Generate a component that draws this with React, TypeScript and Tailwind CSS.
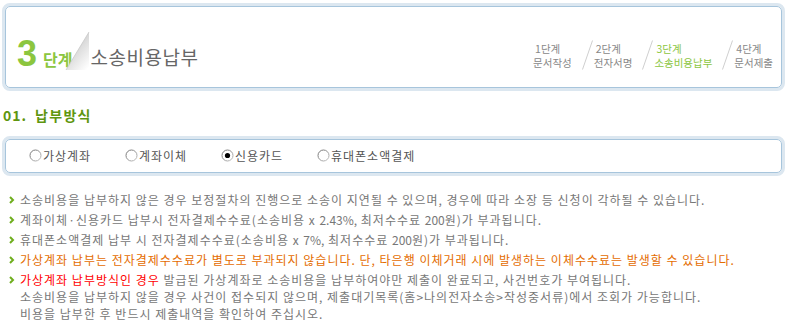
import React from "react";

const font = "font-['Noto_Sans_CJK_KR',sans-serif]";

const steps = [
  { no: "1단계", name: "문서작성", active: false },
  { no: "2단계", name: "전자서명", active: false },
  { no: "3단계", name: "소송비용납부", active: true },
  { no: "4단계", name: "문서제출", active: false },
];

const methods = [
  { label: "가상계좌", checked: false },
  { label: "계좌이체", checked: false },
  { label: "신용카드", checked: true },
  { label: "휴대폰소액결제", checked: false },
];

function Radio({ checked }: { checked: boolean }) {
  return (
    <svg width="13" height="13" viewBox="0 0 13 13" className="shrink-0">
      <defs>
        <linearGradient id="rg" x1="0" y1="0" x2="1" y2="1">
          <stop offset="0" stopColor="#6a6a6a" />
          <stop offset="1" stopColor="#c4c4c4" />
        </linearGradient>
      </defs>
      <circle cx="6.5" cy="6.5" r="5.5" fill="#fff" stroke="url(#rg)" />
      {checked && <circle cx="6.5" cy="6.5" r="2.6" fill="#000" />}
    </svg>
  );
}

function Bullet() {
  return (
    <svg width="6" height="8" viewBox="0 0 6 8" className="shrink-0 mt-[5px]">
      <path d="M1 1l3 3-3 3" stroke="#6fae1e" strokeWidth="2" fill="none" />
    </svg>
  );
}

function Slash() {
  return (
    <svg width="11" height="30" viewBox="0 0 11 30" className="shrink-0 -mt-[2px]">
      <line x1="10.5" y1="0.5" x2="0.5" y2="29.5" stroke="#cfcfcf" />
    </svg>
  );
}

// folded-corner mark between "단계" and the step title
function PageCurl() {
  return (
    <svg width="26" height="40" viewBox="0 0 26 40" className="shrink-0 -ml-[8px] -mb-[5px]">
      <defs>
        <linearGradient id="curl" x1="0.2" y1="0" x2="0.9" y2="1">
          <stop offset="0" stopColor="#b8b8b8" />
          <stop offset="0.5" stopColor="#dedede" />
          <stop offset="1" stopColor="#ffffff" />
        </linearGradient>
      </defs>
      <polygon points="25,1 2,39 25,39" fill="url(#curl)" />
      <line x1="25" y1="1" x2="2" y2="39" stroke="#c9c9c9" strokeWidth="0.8" />
    </svg>
  );
}

export default function App() {
  return (
    <div className={`w-[787px] h-[325px] overflow-hidden bg-white pt-[3px] ${font}`}>
      {/* Header */}
      <div className="mx-[2px] border-[3px] border-[#dce7f0] rounded-[8px]">
        <div className="h-[82px] border border-[#a7c5dc] rounded-[5px] bg-white flex justify-between">
          <div className="pl-[11px] pt-[22px]">
            <div className="flex items-end h-[37px]">
              <span className="font-['Liberation_Sans',sans-serif] font-bold text-[36px] leading-[36px] text-[#8cc63f] -mb-[6px]">
                3
              </span>
              <span className="ml-[6px] text-[16px] leading-[16px] font-bold text-[#8cc63f] -mb-[1px]">
                단계
              </span>
              <PageCurl />
              <span className="text-[19px] leading-[19px] tracking-[0.5px] text-[#666]">소송비용납부</span>
            </div>
          </div>
          <div className="flex pt-[35px] pr-[8px]">
            {steps.map((s, i) => (
              <div key={s.no} className="flex">
                {i > 0 && (
                  <div className="ml-[10px] mr-[1px]">
                    <Slash />
                  </div>
                )}
                <div
                  className={
                    s.active
                      ? "text-[10.5px] leading-[14px] text-[#8cc63f]"
                      : "text-[10.5px] leading-[14px] text-[#888]"
                  }
                >
                  <div className="pl-[2px]">{s.no}</div>
                  <div>{s.name}</div>
                </div>
              </div>
            ))}
          </div>
        </div>
      </div>

      {/* Section title */}
      <h2 className="mt-[14px] pl-[3px] text-[14px] leading-[20px] font-bold text-[#5f960f] flex">
        <span className="tracking-[1px]">01.</span>
        <span className="ml-[8px] tracking-[1.3px]">납부방식</span>
      </h2>

      {/* Payment methods */}
      <div className="mt-[11px] mx-[2px] border-[3px] border-[#dce7f0] rounded-[8px]">
        <div className="h-[34px] border border-[#a7c5dc] rounded-[5px] bg-white flex items-center pl-[23px] pb-[1px]">
          {methods.map((m) => (
            <label
              key={m.label}
              className="w-[96px] shrink-0 flex items-center gap-[1px] whitespace-nowrap text-[12px] tracking-[1px] text-[#555]"
            >
              <Radio checked={m.checked} />
              <span>{m.label}</span>
            </label>
          ))}
        </div>
      </div>

      {/* Notes */}
      <ul className="mt-[15px] pl-[9px] flex flex-col gap-[3px] text-[12px] leading-[17px] tracking-[1px] text-[#777]">
        <li className="flex gap-[5px]">
          <Bullet />
          <p>
            소송비용을 납부하지 않은 경우 보정절차의 진행으로 소송이 지연될 수 있으며, 경우에 따라 소장 등 신청이 각하될 수 있습니다.
          </p>
        </li>
        <li className="flex gap-[5px]">
          <Bullet />
          <p>
            계좌이체·신용카드 납부시 전자결제수수료(소송비용 x <span className="tracking-normal">2.43%,</span> 최저수수료{" "}
            <span className="tracking-normal">200</span>원)가 부과됩니다.
          </p>
        </li>
        <li className="flex gap-[5px]">
          <Bullet />
          <p>
            휴대폰소액결제 납부 시 전자결제수수료(소송비용 x <span className="tracking-normal">7%,</span> 최저수수료{" "}
            <span className="tracking-normal">200</span>원)가 부과됩니다.
          </p>
        </li>
        <li className="flex gap-[5px]">
          <Bullet />
          <p className="text-[#e46c00]">
            가상계좌 납부는 전자결제수수료가 별도로 부과되지 않습니다. 단, 타은행 이체거래 시에 발생하는 이체수수료는 발생할 수 있습니다.
          </p>
        </li>
        <li className="flex gap-[5px]">
          <Bullet />
          <div>
            <p>
              <span className="text-[#ff0000]">가상계좌 납부방식인 경우</span> 발급된 가상계좌로 소송비용을 납부하여야만 제출이 완료되고, 사건번호가 부여됩니다.
            </p>
            <p>소송비용을 납부하지 않을 경우 사건이 접수되지 않으며, 제출대기목록(홈&gt;나의전자소송&gt;작성중서류)에서 조회가 가능합니다.</p>
            <p>비용을 납부한 후 반드시 제출내역을 확인하여 주십시오.</p>
          </div>
        </li>
      </ul>
    </div>
  );
}
